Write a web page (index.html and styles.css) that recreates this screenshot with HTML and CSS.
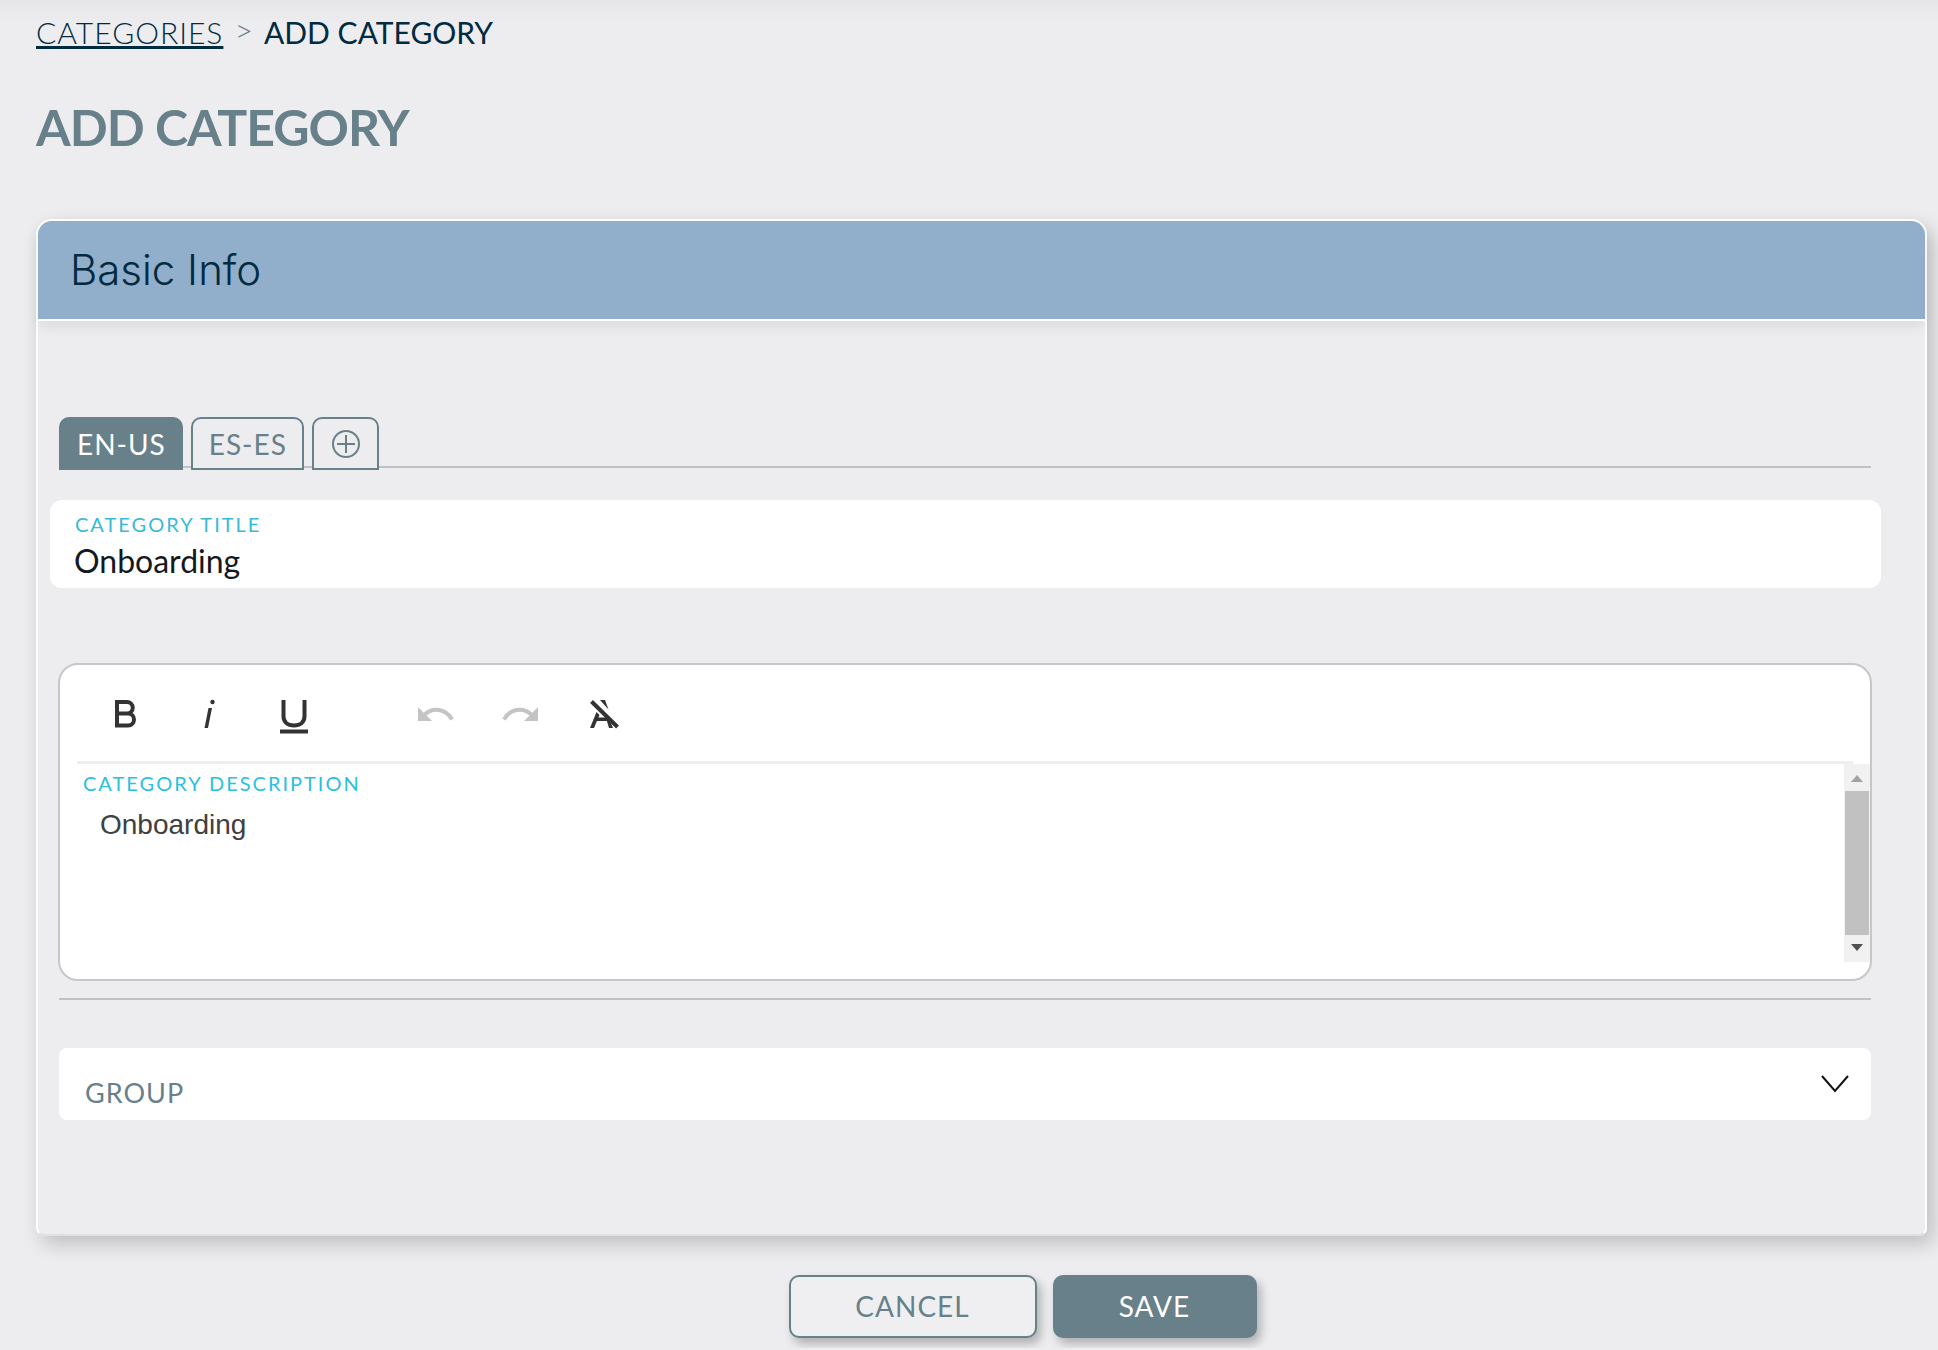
FILE: index.html
```html
<!DOCTYPE html>
<html lang="en">
<head>
    <meta charset="UTF-8">
    <meta name="viewport" content="width=device-width, initial-scale=1.0">
    <title>Add Category</title>
    <link rel="stylesheet" href="styles.css">
</head>
<body>
    <nav class="breadcrumb">
        <a href="#">CATEGORIES</a>
        <span class="separator">&gt;</span>
        <span class="current">ADD CATEGORY</span>
    </nav>

    <h1>ADD CATEGORY</h1>

    <form>
        <section class="card">
            <h2 class="card-header">Basic Info</h2>
            <div class="card-body">
                <div class="tabs">
                    <button type="button" class="tab active">EN-US</button>
                    <button type="button" class="tab">ES-ES</button>
                    <button type="button" class="tab add" aria-label="Add language">
                        <svg width="28" height="28" viewBox="0 0 28 28" fill="none" stroke="currentColor" stroke-width="2">
                            <circle cx="14" cy="14" r="13"/>
                            <path d="M14 5v18M5 14h18"/>
                        </svg>
                    </button>
                </div>

                <div class="titlefield">
                    <label for="title">CATEGORY TITLE</label>
                    <input type="text" id="title" value="Onboarding">
                </div>

                <div class="editor">
                    <div class="toolbar">
                        <button type="button" aria-label="Bold">
                            <svg width="40" height="40" viewBox="0 0 40 40" fill="none" stroke="currentColor" stroke-width="4">
                                <path d="M11 8h10a5.500 5.500 0 0 1 0 11.500H11M21 19.500h1a6 6 0 0 1 0 12H11M11 6v27.500"/>
                            </svg>
                        </button>
                        <button type="button" aria-label="Italic">
                            <svg width="40" height="40" viewBox="0 0 40 40" fill="currentColor">
                                <path d="M18.500 14h3.500l-4 20h-3.500z"/>
                                <circle cx="22.500" cy="8" r="2.200"/>
                            </svg>
                        </button>
                        <button type="button" aria-label="Underline">
                            <svg width="40" height="40" viewBox="0 0 40 40" fill="none" stroke="currentColor" stroke-width="4">
                                <path d="M9.500 6v16c0 6 4 9.500 10.500 9.500S30.500 28 30.500 22V6M6 37.500h28"/>
                            </svg>
                        </button>
                        <button type="button" class="undo" aria-label="Undo" disabled>
                            <svg width="40" height="40" viewBox="0 0 40 40">
                                <path d="M2 13v14h14z" fill="currentColor"/>
                                <path d="M8 21C17 12.500 30 14.500 36 25.500" fill="none" stroke="currentColor" stroke-width="4"/>
                            </svg>
                        </button>
                        <button type="button" aria-label="Redo" disabled>
                            <svg width="40" height="40" viewBox="0 0 40 40">
                                <path d="M38 13v14H24z" fill="currentColor"/>
                                <path d="M32 21C23 12.500 10 14.500 4 25.500" fill="none" stroke="currentColor" stroke-width="4"/>
                            </svg>
                        </button>
                        <button type="button" aria-label="Clear formatting">
                            <svg width="40" height="40" viewBox="0 0 40 40" fill="currentColor">
                                <path d="M6 34l6.500-16 3 3L10 34zM12 23.500h12V27H12zM22 24l4 3 3 7h-4zM16 6h5l3.500 9.500z"/>
                                <path d="M7.500 7.500l26 25.500" fill="none" stroke="currentColor" stroke-width="4"/>
                            </svg>
                        </button>
                    </div>
                    <div class="editor-content">
                        <div class="editor-text">
                            <label for="description">CATEGORY DESCRIPTION</label>
                            <textarea id="description">Onboarding</textarea>
                        </div>
                        <div class="scrollbar">
                            <span class="arrow up"></span>
                            <span class="thumb"></span>
                            <span class="arrow down"></span>
                        </div>
                    </div>
                </div>

                <hr>

                <div class="group">
                    <select aria-label="Group">
                        <option>GROUP</option>
                    </select>
                    <svg width="28" height="18" viewBox="0 0 28 18" fill="none" stroke="#111" stroke-width="2">
                        <path d="M1 1l13 15L27 1"/>
                    </svg>
                </div>
            </div>
        </section>

        <div class="actions">
            <button type="button" class="btn cancel">CANCEL</button>
            <button type="submit" class="btn save">SAVE</button>
        </div>
    </form>
</body>
</html>
```
FILE: styles.css
```css
*{
    box-sizing: border-box;
}
body{
    margin: 0;
    padding: 12px 11px 10px 36px;
    background: #ededef linear-gradient(#e6e6e8, #ededef 24px) no-repeat;
    color: #002b40;
    font-family: Lato, sans-serif;
}
button, input, select, textarea{
    font-family: inherit;
    margin: 0;
}
.breadcrumb{
    display: flex;
    gap: 11px;
    height: 40px;
    font-size: 30px;
    line-height: 40px;
}
.breadcrumb a{
    color: inherit;
    font-weight: 300;
    letter-spacing: 1px;
}
.separator{
    color: #67808a;
    font-size: 32px;
    font-weight: 300;
    line-height: 36px;
}
h1{
    margin: 44px 0 60px;
    color: #67808a;
    font-size: 50px;
    line-height: 63px;
    letter-spacing: -1px;
}
.card{
    border: 2px solid #fff;
    border-bottom-color: #e0e0e2;
    border-radius: 16px 16px 8px 8px;
    box-shadow: 6px 8px 20px rgba(0, 0, 0, .2);
}
.card-header{
    margin: 0;
    padding: 0 32px;
    border-bottom: 2px solid #fff;
    border-radius: 14px 14px 0 0;
    background-color: #91aecb;
    box-shadow: 0 6px 14px rgba(0, 0, 0, .07);
    font-family: Inter, sans-serif;
    font-size: 42px;
    font-weight: 300;
    line-height: 98px;
}
.card-body{
    padding: 96px 54px 114px 21px;
}
.tabs{
    display: flex;
    gap: 8px;
    height: 51px;
    border-bottom: 2px solid #bfc0c8;
}
.tab{
    height: 53px;
    padding: 0 15px 0 16px;
    border: 2px solid #67808a;
    border-radius: 10px 10px 0 0;
    background-color: #ededef;
    color: #67808a;
    font-size: 28px;
    letter-spacing: 1px;
}
.tab.active{
    background-color: #67808a;
    color: #fff;
}
.tab.add{
    width: 67px;
}
.tab svg{
    display: block;
    margin: auto;
}
.titlefield{
    display: flex;
    flex-direction: column;
    height: 88px;
    margin: 32px -10px 75px -9px;
    padding: 11px 24px 0;
    border-radius: 12px;
    background-color: #fff;
}
label{
    color: #3ab9d8;
    font-size: 20px;
    line-height: 26px;
    letter-spacing: 2px;
}
.titlefield label{
    padding-left: 1px;
}
.titlefield input{
    padding: 0;
    border: 0;
    outline: 0;
    background: none;
    color: #14191e;
    font-size: 32px;
    line-height: 48px;
}
.editor{
    margin: 0 -1px;
    border: 2px solid #c6c7c9;
    border-radius: 20px;
    background-color: #fff;
    overflow: hidden;
}
.toolbar{
    display: flex;
    gap: 44px;
    margin: 0 17px;
    padding: 29px 0 27px 29px;
    border-bottom: 3px solid #eee;
}
.toolbar button{
    padding: 0;
    border: 0;
    background: none;
    color: #333;
}
.toolbar button:disabled{
    color: #c4c4c4;
}
.toolbar svg{
    display: block;
}
.toolbar .undo{
    margin-left: 58px;
}
.editor-content{
    display: flex;
    height: 215px;
}
.editor-text{
    display: flex;
    flex: 1;
    flex-direction: column;
    padding: 6px 23px;
}
.editor-text label{
    color: #2bc0de;
}
textarea{
    flex: 1;
    padding: 13px 17px;
    border: 0;
    outline: 0;
    resize: none;
    overflow: hidden;
    color: #404040;
}
.editor-text textarea{
    font-family: "Liberation Sans", Arial, sans-serif;
    font-size: 28px;
    line-height: 32px;
}
.scrollbar{
    display: flex;
    flex-direction: column;
    align-items: center;
    width: 26px;
    height: 198px;
    padding: 11px 1px;
    background-color: #f1f1f1;
}
.thumb{
    flex: 1;
    width: 100%;
    margin: 9px 0;
    background-color: #c1c1c1;
}
.arrow{
    border: 6px solid transparent;
}
.arrow.up{
    border-top: 0;
    border-bottom: 7px solid #a3a3a3;
}
.arrow.down{
    border-top: 7px solid #505050;
    border-bottom: 0;
}
hr{
    margin: 17px 0 48px;
    border: 0;
    border-top: 2px solid #bfc0c8;
}
.group{
    display: flex;
    position: relative;
}
.group select{
    flex: 1;
    height: 72px;
    padding: 16px 26px 0;
    border: 0;
    border-radius: 8px;
    appearance: none;
    background-color: #fff;
    color: #67808a;
    font-size: 27px;
    letter-spacing: 1px;
}
.group svg{
    position: absolute;
    top: 27px;
    right: 22px;
    pointer-events: none;
}
.actions{
    display: flex;
    justify-content: center;
    gap: 16px;
    margin-top: 39px;
    padding-left: 82px;
}
.btn{
    width: 204px;
    height: 63px;
    padding: 0 6px 2px;
    border: 2px solid #67808a;
    border-radius: 10px;
    box-shadow: 4px 6px 10px rgba(0, 0, 0, .25);
    font-size: 28px;
    letter-spacing: 1px;
}
.cancel{
    width: 248px;
    background-color: #efeff1;
    color: #67808a;
}
.save{
    background-color: #67808a;
    color: #fff;
}
```
